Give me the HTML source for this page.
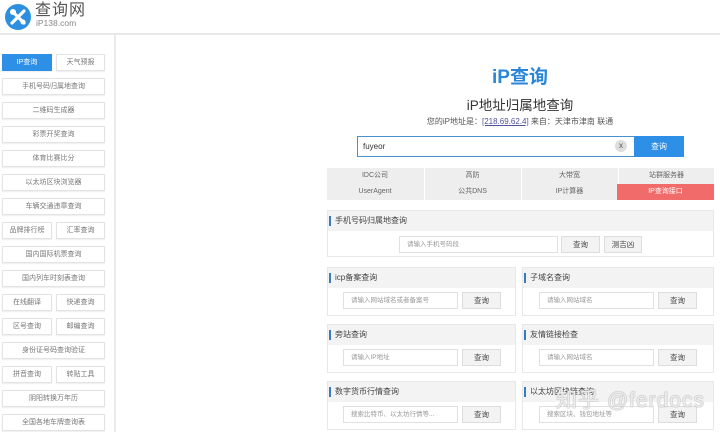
<!DOCTYPE html>
<html><head><meta charset="utf-8"><style>
*{margin:0;padding:0;box-sizing:border-box}
body{width:720px;height:432px;overflow:hidden;background:#fff;font-family:"Liberation Sans","Noto Sans CJK SC",sans-serif;color:#333;position:relative}
.a{position:absolute}
.hd{left:0;top:0;width:720px;height:35px;border-bottom:2px solid #e8e8e8}
.side{left:114px;top:35px;width:2px;height:397px;background:#ebebeb}
.b{position:absolute;height:17px;border:1px solid #e3e3e3;font-size:7px;color:#777;text-align:center;line-height:15px;background:#fff;box-shadow:0 1px 1px #eee}
.tab{position:absolute;width:96px;height:16px;font-size:7px;color:#666;text-align:center;line-height:16px;background:#eee}
.box{position:absolute;border:1px solid #e8e8e8;background:#fff}
.bh{height:20px;background:#f3f3f3;font-size:8px;color:#444;line-height:20px;padding-left:7px;position:relative}
.bh:before{content:"";position:absolute;left:1px;top:5px;width:2px;height:10px;background:#3a7bc0}
.in{position:absolute;height:17px;border:1px solid #e0e0e0;font-size:6.5px;color:#999;line-height:15px;padding-left:7px;background:#fff}
.bt{position:absolute;height:17px;border:1px solid #ddd;background:#f3f3f3;font-size:7.5px;color:#444;text-align:center;line-height:15px}
</style></head><body>
<div class="a hd"></div>
<svg class="a" style="left:5px;top:4px" width="26" height="26" viewBox="0 0 26 26"><circle cx="13" cy="13" r="13" fill="#2d8fe0"/><path d="M7 7l12 12M19 7L7 19" stroke="#fff" stroke-width="3.2" stroke-linecap="round"/><circle cx="8" cy="8" r="3" fill="#fff"/><circle cx="18" cy="18" r="2.5" fill="#fff"/></svg>
<div class="a" style="left:35px;top:3px;font-size:16px;line-height:16px;color:#555;letter-spacing:1px">查询网</div>
<div class="a" style="left:36px;top:19px;font-size:8.5px;line-height:9px;color:#888">iP138.com</div>
<div class="a side"></div>

<div class="b" style="left:2px;top:54px;width:50px;background:#2d8fe6;color:#fff;border-color:#2d8fe6">IP查询</div>
<div class="b" style="left:56px;top:54px;width:49px">天气预报</div>
<div class="b" style="left:2px;top:78px;width:103px">手机号码归属地查询</div>
<div class="b" style="left:2px;top:102px;width:103px">二维码生成器</div>
<div class="b" style="left:2px;top:126px;width:103px">彩票开奖查询</div>
<div class="b" style="left:2px;top:150px;width:103px">体育比赛比分</div>
<div class="b" style="left:2px;top:174px;width:103px">以太坊区块浏览器</div>
<div class="b" style="left:2px;top:198px;width:103px">车辆交通违章查询</div>
<div class="b" style="left:2px;top:222px;width:50px">品牌排行榜</div>
<div class="b" style="left:56px;top:222px;width:49px">汇率查询</div>
<div class="b" style="left:2px;top:246px;width:103px">国内国际机票查询</div>
<div class="b" style="left:2px;top:270px;width:103px">国内列车时刻表查询</div>
<div class="b" style="left:2px;top:294px;width:50px">在线翻译</div>
<div class="b" style="left:56px;top:294px;width:49px">快递查询</div>
<div class="b" style="left:2px;top:318px;width:50px">区号查询</div>
<div class="b" style="left:56px;top:318px;width:49px">邮编查询</div>
<div class="b" style="left:2px;top:342px;width:103px">身份证号码查询验证</div>
<div class="b" style="left:2px;top:366px;width:50px">拼音查询</div>
<div class="b" style="left:56px;top:366px;width:49px">转贴工具</div>
<div class="b" style="left:2px;top:390px;width:103px">阴阳转换万年历</div>
<div class="b" style="left:2px;top:414px;width:103px">全国各地车牌查询表</div>

<div class="a" style="left:320px;width:400px;top:62px;text-align:center;font-size:19px;font-weight:bold;color:#2b86d8">iP查询</div>
<div class="a" style="left:320px;width:400px;top:94px;text-align:center;font-size:13.5px;color:#333">iP地址归属地查询</div>
<div class="a" style="left:320px;width:400px;top:116px;text-align:center;font-size:8px;color:#555">您的iP地址是：<span style="color:#5050a0;text-decoration:underline">[218.69.62.4]</span> 来自：天津市津南 联通</div>
<div class="a" style="left:357px;top:136px;width:278px;height:21px;border:1px solid #4a90d0;background:#fff;font-size:8px;line-height:19px;padding-left:5px">fuyeor</div>
<div class="a" style="left:615px;top:140px;width:12px;height:12px;border-radius:6px;background:#ddd;font-size:8px;text-align:center;line-height:12px;color:#555">x</div>
<div class="a" style="left:634px;top:136px;width:50px;height:21px;background:#2d8fe6;color:#fff;font-size:8px;text-align:center;line-height:21px">查询</div>

<div class="a" style="left:327px;top:168px;width:387px;height:32px;background:#eee"></div>
<div class="tab" style="left:327px;top:168px">IDC公司</div>
<div class="tab" style="left:424px;top:168px;border-left:1px solid #fff">高防</div>
<div class="tab" style="left:521px;top:168px;border-left:1px solid #fff">大带宽</div>
<div class="tab" style="left:618px;top:168px;border-left:1px solid #fff">站群服务器</div>
<div class="tab" style="left:327px;top:184px">UserAgent</div>
<div class="tab" style="left:424px;top:184px;border-left:1px solid #fff">公共DNS</div>
<div class="tab" style="left:521px;top:184px;border-left:1px solid #fff">IP计算器</div>
<div class="tab" style="left:617px;top:184px;width:97px;background:#f26b6b;color:#fff">IP查询接口</div>

<div class="box" style="left:327px;top:210px;width:387px;height:47px"><div class="bh">手机号码归属地查询</div></div>
<div class="in" style="left:399px;top:236px;width:159px">请输入手机号码段</div>
<div class="bt" style="left:561px;top:236px;width:39px">查询</div>
<div class="bt" style="left:604px;top:236px;width:38px">测吉凶</div>

<div class="box" style="left:327px;top:267px;width:189px;height:49px"><div class="bh">icp备案查询</div></div>
<div class="in" style="left:343px;top:292px;width:115px">请输入网站域名或者备案号</div>
<div class="bt" style="left:462px;top:292px;width:39px">查询</div>
<div class="box" style="left:522px;top:267px;width:192px;height:49px"><div class="bh">子域名查询</div></div>
<div class="in" style="left:539px;top:292px;width:115px">请输入网站域名</div>
<div class="bt" style="left:658px;top:292px;width:39px">查询</div>

<div class="box" style="left:327px;top:324px;width:189px;height:49px"><div class="bh">旁站查询</div></div>
<div class="in" style="left:343px;top:349px;width:115px">请输入IP地址</div>
<div class="bt" style="left:462px;top:349px;width:39px">查询</div>
<div class="box" style="left:522px;top:324px;width:192px;height:49px"><div class="bh">友情链接检查</div></div>
<div class="in" style="left:539px;top:349px;width:115px">请输入网站域名</div>
<div class="bt" style="left:658px;top:349px;width:39px">查询</div>

<div class="box" style="left:327px;top:381px;width:189px;height:49px"><div class="bh">数字货币行情查询</div></div>
<div class="in" style="left:343px;top:406px;width:115px">搜索比特币、以太坊行情等...</div>
<div class="bt" style="left:462px;top:406px;width:39px">查询</div>
<div class="box" style="left:522px;top:381px;width:192px;height:49px"><div class="bh">以太坊区块链查询</div></div>
<div class="in" style="left:539px;top:406px;width:115px">搜索区块、钱包地址等</div>
<div class="bt" style="left:658px;top:406px;width:39px">查询</div>

<div class="a" style="left:556px;top:384px;font-size:21px;color:rgba(255,255,255,0.8);text-shadow:0 0 1px #999,0 0 1px #aaa;letter-spacing:1px">知乎 @ferdocs</div>
</body></html>
